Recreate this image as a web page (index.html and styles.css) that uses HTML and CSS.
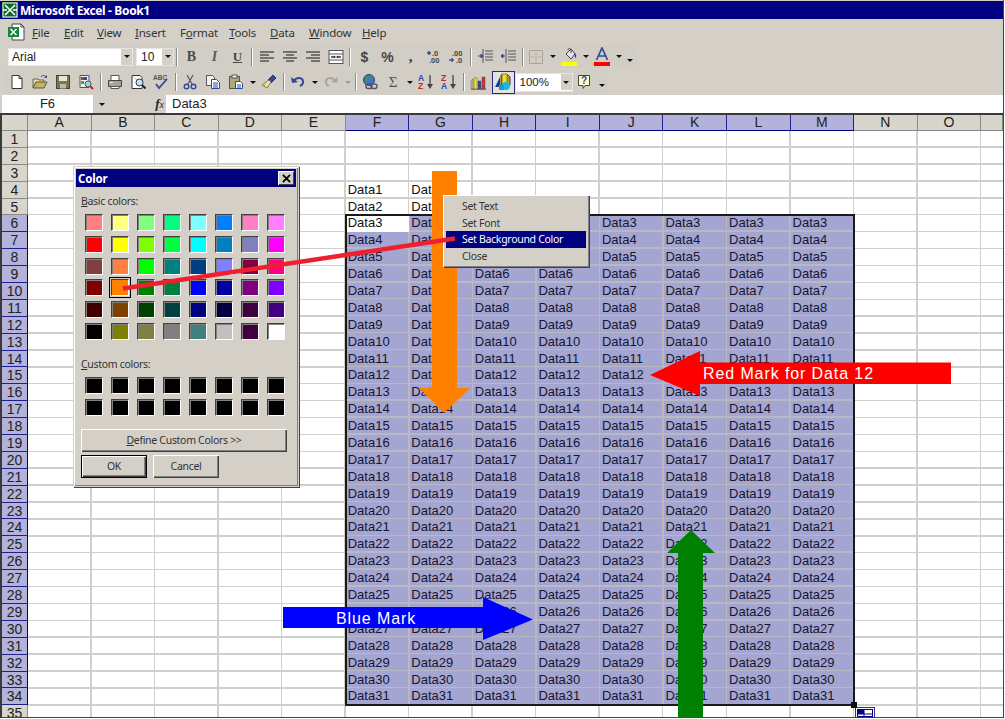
FILE: index.html
```html
<!DOCTYPE html>
<html lang="en">
<head>
<meta charset="utf-8">
<title>Microsoft Excel - Book1</title>
<link rel="stylesheet" href="styles.css">
</head>
<body>
<div class="window">
  <header class="titlebar">
    <svg class="appicon" viewBox="0 0 16 16"><rect width="16" height="16" fill="#0b6b2a"/><rect x="1" y="1" width="14" height="14" fill="none" stroke="#fff"/><path d="M3 3l10 10M13 3L3 13M1 8h4M11 8h4" stroke="#fff" stroke-width="1.6"/></svg>
    <span>Microsoft Excel - Book1</span>
  </header>
  <nav class="menubar">
    <svg class="docicon" viewBox="0 0 18 18"><path d="M5 1h9l3 3v13H5z" fill="#fff" stroke="#444"/><path d="M14 1v3h3" fill="none" stroke="#444"/><rect x="1" y="4" width="11" height="10" fill="#128a3c"/><path d="M3.500 6l6 6M9.500 6l-6 6" stroke="#fff" stroke-width="1.500"/></svg>
    <span class="m1"><u>F</u>ile</span><span class="m2"><u>E</u>dit</span><span class="m3"><u>V</u>iew</span><span class="m4"><u>I</u>nsert</span><span class="m5">F<u>o</u>rmat</span><span class="m6"><u>T</u>ools</span><span class="m7"><u>D</u>ata</span><span class="m8"><u>W</u>indow</span><span class="m9"><u>H</u>elp</span>
  </nav>
  <div class="toolbar tb-format">
    <div class="combo font-combo"><span>Arial</span><i class="combo-btn"><b class="dd"></b></i></div>
    <div class="combo size-combo"><span>10</span><i class="combo-btn"><b class="dd"></b></i></div>
    <i class="sep"></i>
    <span class="btn t-b">B</span><span class="btn t-i">I</span><span class="btn t-u">U</span>
    <i class="sep"></i>
    <span class="btn"><svg class="ic" viewBox="0 0 16 16"><path d="M1 3h14M1 6h9M1 9h14M1 12h9" stroke="#555" fill="none" stroke-width="1.300"/></svg></span>
    <span class="btn"><svg class="ic" viewBox="0 0 16 16"><path d="M1 3h14M4 6h8M1 9h14M4 12h8" stroke="#555" fill="none" stroke-width="1.300"/></svg></span>
    <span class="btn"><svg class="ic" viewBox="0 0 16 16"><path d="M1 3h14M6 6h9M1 9h14M6 12h9" stroke="#555" fill="none" stroke-width="1.300"/></svg></span>
    <span class="btn"><svg class="ic" viewBox="0 0 16 16"><rect x="1" y="1.500" width="14" height="13" fill="#fff" stroke="#555"/><path d="M1 5h14M1 11h14" stroke="#555"/><path d="M3 8h3M10 8h3" stroke="#234" stroke-width="1.500"/><path d="M6 6.500L8 8 6 9.500zM10 6.500L8 8l2 1.500z" fill="#234"/></svg></span>
    <i class="sep"></i>
    <span class="btn t-sym">$</span><span class="btn t-pct">%</span><span class="btn t-comma">,</span>
    <span class="btn"><svg class="ic" viewBox="0 0 16 16"><text x="6" y="7" class="mini">.0</text><text x="3" y="14" class="mini">.00</text><path d="M1 4h4M3 2v4" stroke="#33489a" stroke-width="1.300"/></svg></span>
    <span class="btn"><svg class="ic" viewBox="0 0 16 16"><text x="3" y="7" class="mini">.00</text><text x="7" y="14" class="mini">.0</text><path d="M0 11h5" stroke="#33489a" stroke-width="1.300"/><path d="M3 9v4" stroke="#33489a" stroke-width="1.300"/></svg></span>
    <i class="sep"></i>
    <span class="btn"><svg class="ic" viewBox="0 0 16 16"><path d="M7 2h8M7 5h8M7 8h8M7 11h8M5 14v-14" stroke="#555" fill="none"/><path d="M0 7h3M3 5l2 2-2 2z" stroke="#33489a" fill="#33489a"/></svg></span>
    <span class="btn"><svg class="ic" viewBox="0 0 16 16"><path d="M7 2h8M7 5h8M7 8h8M7 11h8M5 14v-14" stroke="#555" fill="none"/><path d="M1 7h3M2 5L0 7l2 2z" stroke="#33489a" fill="#33489a"/></svg></span>
    <i class="sep sep-n"></i>
    <span class="btn"><svg class="ic" viewBox="0 0 16 16"><rect x="1.500" y="1.500" width="13" height="13" fill="none" stroke="#aaa69e"/><path d="M8 2v12M2 8h12" stroke="#b8b4ac"/></svg></span><span class="ddw"><b class="dd"></b></span>
    <span class="btn"><svg class="ic tall" viewBox="0 0 16 20"><path d="M5 7l5-5 4 5-4 5z" fill="#e8e4dc" stroke="#445"/><path d="M14 6c2 2 1 4 1 5-1 0-2-2-1-5z" fill="#33489a"/><path d="M7 3c0-2 3-2 3 0v3" fill="none" stroke="#445"/><rect y="15" width="16" height="4" fill="#ff0"/></svg></span><span class="ddw"><b class="dd"></b></span>
    <span class="btn"><svg class="ic tall" viewBox="0 0 16 20"><path d="M2.500 13L8 1l5.500 12M5 9h6" fill="none" stroke="#33489a" stroke-width="1.700"/><rect y="15" width="16" height="4" fill="#f00"/></svg></span><span class="ddw"><b class="dd"></b></span>
    <span class="chev"><b class="dd"></b></span>
  </div>
  <div class="toolbar tb-std">
    <span class="btn"><svg class="ic" viewBox="0 0 16 16"><path d="M3 1.500h7l3 3v10H3z" fill="#fff" stroke="#333"/><path d="M10 1.500v3h3" fill="none" stroke="#333"/></svg></span>
    <span class="btn"><svg class="ic" viewBox="0 0 16 16"><path d="M1 14V5h5l1 1h5v2" fill="#e8d890" stroke="#666"/><path d="M1 14l3-6h11l-3 6z" fill="#c4b458" stroke="#555"/><path d="M9 3c1-2 4-2 5 0" fill="none" stroke="#33489a"/><path d="M15 1v3h-3z" fill="#33489a"/></svg></span>
    <span class="btn"><svg class="ic" viewBox="0 0 16 16"><rect x="1.500" y="1.500" width="13" height="13" fill="#7c7640" stroke="#444"/><rect x="4" y="2" width="8" height="5" fill="#e8e6da"/><rect x="5" y="10" width="6" height="4.500" fill="#b8b8b8"/></svg></span>
    <span class="btn"><svg class="ic" viewBox="0 0 16 16"><path d="M2 1.500h9v12H2z" fill="#f4f2ee" stroke="#555"/><rect x="3" y="3" width="3" height="3" fill="#c33"/><rect x="6" y="3" width="3" height="3" fill="#33489a"/><rect x="3" y="7" width="3" height="3" fill="#3a3"/><circle cx="10" cy="10" r="3" fill="#8fd6e8" stroke="#555"/><path d="M12 12l3 3" stroke="#c22" stroke-width="2"/></svg></span>
    <i class="sep"></i>
    <span class="btn"><svg class="ic" viewBox="0 0 16 16"><path d="M4 6V1.500h8V6" fill="#fff" stroke="#555"/><path d="M1.500 6.500h13v6h-13z" fill="#a8a49c" stroke="#444"/><path d="M4 12.500h8v2H4z" fill="#fff" stroke="#555"/><path d="M3 8.500h3" stroke="#eee"/></svg></span>
    <span class="btn"><svg class="ic" viewBox="0 0 16 16"><path d="M2 1.500h8l2 2v5M12 13v1.500H2v-13" fill="#fff" stroke="#333"/><circle cx="9.500" cy="8.500" r="3.500" fill="#bfe4ee" stroke="#334"/><path d="M12 11l3.500 3.500" stroke="#223" stroke-width="2"/></svg></span>
    <span class="btn"><svg class="ic" viewBox="0 0 16 16"><text x="0" y="6" class="abc">ABC</text><path d="M3 10l3 4 8-9" fill="none" stroke="#33489a" stroke-width="1.800"/></svg></span>
    <i class="sep"></i>
    <span class="btn"><svg class="ic" viewBox="0 0 16 16"><path d="M5 1l5 9M11 1L6 10" stroke="#556" stroke-width="1.200"/><circle cx="4.500" cy="12.500" r="2.300" fill="none" stroke="#33489a" stroke-width="1.400"/><circle cx="11.500" cy="12.500" r="2.300" fill="none" stroke="#33489a" stroke-width="1.400"/></svg></span>
    <span class="btn"><svg class="ic" viewBox="0 0 16 16"><path d="M1.500 1.500h6l2 2v8h-8z" fill="#f4f2ee" stroke="#556"/><path d="M6.500 5.500h5l3 3v6h-8z" fill="#fff" stroke="#33489a"/><path d="M8 9h5M8 11h5M8 13h5" stroke="#33489a"/></svg></span>
    <span class="btn"><svg class="ic" viewBox="0 0 16 16"><rect x="1.500" y="2.500" width="10" height="12" fill="#b0a878" stroke="#555"/><rect x="4" y="1" width="5" height="3" fill="#eee" stroke="#555"/><path d="M7.500 7.500h5l2 2v5h-7z" fill="#fff" stroke="#33489a"/><path d="M9 11h4M9 13h4" stroke="#33489a"/></svg></span><span class="ddw"><b class="dd"></b></span>
    <span class="btn"><svg class="ic" viewBox="0 0 16 16"><path d="M7 6l5-5 3 3-5 5z" fill="#33489a" stroke="#334"/><path d="M8 6l2 2-4 6-5-3z" fill="#f0e68c" stroke="#777"/><path d="M3 12l2-2" stroke="#b8a840"/></svg></span>
    <i class="sep"></i>
    <span class="btn"><svg class="ic" viewBox="0 0 16 16"><path d="M4 7c2-4 8-4 9 0 .5 2-1 4-3 5" fill="none" stroke="#33489a" stroke-width="2"/><path d="M1 3l1 6 6-1z" fill="#33489a"/></svg></span><span class="ddw"><b class="dd"></b></span>
    <span class="btn"><svg class="ic" viewBox="0 0 16 16"><path d="M12 7c-2-4-8-4-9 0-.5 2 1 4 3 5" fill="none" stroke="#aaa69e" stroke-width="2"/><path d="M15 3l-1 6-6-1z" fill="#aaa69e"/></svg></span><span class="ddw"><b class="dd dd-off"></b></span>
    <i class="sep"></i>
    <span class="btn"><svg class="ic" viewBox="0 0 16 16"><circle cx="7" cy="6" r="5.500" fill="#3b78c8" stroke="#345"/><path d="M3 3c2 0 3 1 3 3s-2 1-3 0zM7 1c2 1 4 2 3 4-1 1-2 0-3-1z" fill="#3a9a4a"/><rect x="4" y="10" width="6" height="4.500" rx="2" fill="none" stroke="#556" stroke-width="1.400"/><rect x="9" y="10" width="6" height="4.500" rx="2" fill="none" stroke="#556" stroke-width="1.400"/></svg></span>
    <span class="btn t-sigma">Σ</span><span class="ddw"><b class="dd"></b></span>
    <span class="btn"><svg class="ic" viewBox="0 0 16 16"><text x="0" y="7" class="sa">A</text><text x="0" y="15" class="sz">Z</text><path d="M12 1v12" stroke="#444" stroke-width="1.300"/><path d="M9 10h6l-3 5z" fill="#444"/></svg></span>
    <span class="btn"><svg class="ic" viewBox="0 0 16 16"><text x="0" y="7" class="sz">Z</text><text x="0" y="15" class="sa">A</text><path d="M12 1v12" stroke="#444" stroke-width="1.300"/><path d="M9 10h6l-3 5z" fill="#444"/></svg></span>
    <i class="sep"></i>
    <span class="btn"><svg class="ic" viewBox="0 0 16 16"><path d="M1 15h15" stroke="#333"/><path d="M1 7l2-2v10H1z" fill="#c8c4a0" stroke="#555" stroke-width=".5"/><rect x="4" y="4" width="3" height="11" fill="#f4e040" stroke="#555" stroke-width=".5"/><rect x="8" y="7" width="3" height="8" fill="#33489a" stroke="#555" stroke-width=".5"/><rect x="12" y="3" width="3" height="12" fill="#c33" stroke="#555" stroke-width=".5"/></svg></span>
    <span class="btn btn-on"><svg class="ic ic-l" viewBox="0 0 18 18"><path d="M7 2h7l2 2v8H7z" fill="#b8a020" stroke="#443"/><rect x="8" y="1" width="5" height="10" fill="#f0e020" stroke="#443" stroke-width=".6"/><path d="M1 14L6 4v10z" fill="#1c3c9c"/><circle cx="12" cy="13" r="4" fill="#18b8e8"/><rect x="5" y="12" width="5" height="5" fill="#18a0d0"/></svg></span>
    <div class="combo zoom-combo"><span>100%</span><i class="combo-btn"><b class="dd"></b></i></div>
    <span class="btn"><svg class="ic" viewBox="0 0 16 16"><path d="M2.500 1.500h11v10H9l-2 3v-3H2.500z" fill="#ffffc8" stroke="#444"/><text x="5" y="10" class="q">?</text></svg></span>
    <span class="chev"><b class="dd"></b></span>
  </div>
  <div class="formula">
    <div class="namebox">F6</div>
    <span class="name-dd"><b class="dd"></b></span>
    <span class="fx"><em>f</em><small>x</small></span>
    <div class="fx-input">Data3</div>
  </div>
  <div class="sheet">
    <div class="colhdr">
      <i class="corner"></i>
      <span>A</span><span>B</span><span>C</span><span>D</span><span>E</span><span class="sel">F</span><span class="sel">G</span><span class="sel">H</span><span class="sel">I</span><span class="sel">J</span><span class="sel">K</span><span class="sel">L</span><span class="sel">M</span><span>N</span><span>O</span><span></span>
    </div>
    <div class="sheet-main">
      <div class="rowhdr">
        <span>1</span><span>2</span><span>3</span><span>4</span><span>5</span><span class="sel">6</span><span class="sel">7</span><span class="sel">8</span><span class="sel">9</span><span class="sel">10</span><span class="sel">11</span><span class="sel">12</span><span class="sel">13</span><span class="sel">14</span><span class="sel">15</span><span class="sel">16</span><span class="sel">17</span><span class="sel">18</span><span class="sel">19</span><span class="sel">20</span><span class="sel">21</span><span class="sel">22</span><span class="sel">23</span><span class="sel">24</span><span class="sel">25</span><span class="sel">26</span><span class="sel">27</span><span class="sel">28</span><span class="sel">29</span><span class="sel">30</span><span class="sel">31</span><span class="sel">32</span><span class="sel">33</span><span class="sel">34</span><span>35</span>
      </div>
      <div class="cells">
        <div class="head-data">
          <span>Data1</span><span>Data1</span><span>Data2</span><span>Data2</span>
        </div>
        <div class="block">
          <span class="active">Data3</span><span>Data3</span><span>Data3</span><span>Data3</span><span>Data3</span><span>Data3</span><span>Data3</span><span>Data3</span>
          <span>Data4</span><span>Data4</span><span>Data4</span><span>Data4</span><span>Data4</span><span>Data4</span><span>Data4</span><span>Data4</span>
          <span>Data5</span><span>Data5</span><span>Data5</span><span>Data5</span><span>Data5</span><span>Data5</span><span>Data5</span><span>Data5</span>
          <span>Data6</span><span>Data6</span><span>Data6</span><span>Data6</span><span>Data6</span><span>Data6</span><span>Data6</span><span>Data6</span>
          <span>Data7</span><span>Data7</span><span>Data7</span><span>Data7</span><span>Data7</span><span>Data7</span><span>Data7</span><span>Data7</span>
          <span>Data8</span><span>Data8</span><span>Data8</span><span>Data8</span><span>Data8</span><span>Data8</span><span>Data8</span><span>Data8</span>
          <span>Data9</span><span>Data9</span><span>Data9</span><span>Data9</span><span>Data9</span><span>Data9</span><span>Data9</span><span>Data9</span>
          <span>Data10</span><span>Data10</span><span>Data10</span><span>Data10</span><span>Data10</span><span>Data10</span><span>Data10</span><span>Data10</span>
          <span>Data11</span><span>Data11</span><span>Data11</span><span>Data11</span><span>Data11</span><span>Data11</span><span>Data11</span><span>Data11</span>
          <span>Data12</span><span>Data12</span><span>Data12</span><span>Data12</span><span>Data12</span><span>Data12</span><span>Data12</span><span>Data12</span>
          <span>Data13</span><span>Data13</span><span>Data13</span><span>Data13</span><span>Data13</span><span>Data13</span><span>Data13</span><span>Data13</span>
          <span>Data14</span><span>Data14</span><span>Data14</span><span>Data14</span><span>Data14</span><span>Data14</span><span>Data14</span><span>Data14</span>
          <span>Data15</span><span>Data15</span><span>Data15</span><span>Data15</span><span>Data15</span><span>Data15</span><span>Data15</span><span>Data15</span>
          <span>Data16</span><span>Data16</span><span>Data16</span><span>Data16</span><span>Data16</span><span>Data16</span><span>Data16</span><span>Data16</span>
          <span>Data17</span><span>Data17</span><span>Data17</span><span>Data17</span><span>Data17</span><span>Data17</span><span>Data17</span><span>Data17</span>
          <span>Data18</span><span>Data18</span><span>Data18</span><span>Data18</span><span>Data18</span><span>Data18</span><span>Data18</span><span>Data18</span>
          <span>Data19</span><span>Data19</span><span>Data19</span><span>Data19</span><span>Data19</span><span>Data19</span><span>Data19</span><span>Data19</span>
          <span>Data20</span><span>Data20</span><span>Data20</span><span>Data20</span><span>Data20</span><span>Data20</span><span>Data20</span><span>Data20</span>
          <span>Data21</span><span>Data21</span><span>Data21</span><span>Data21</span><span>Data21</span><span>Data21</span><span>Data21</span><span>Data21</span>
          <span>Data22</span><span>Data22</span><span>Data22</span><span>Data22</span><span>Data22</span><span>Data22</span><span>Data22</span><span>Data22</span>
          <span>Data23</span><span>Data23</span><span>Data23</span><span>Data23</span><span>Data23</span><span>Data23</span><span>Data23</span><span>Data23</span>
          <span>Data24</span><span>Data24</span><span>Data24</span><span>Data24</span><span>Data24</span><span>Data24</span><span>Data24</span><span>Data24</span>
          <span>Data25</span><span>Data25</span><span>Data25</span><span>Data25</span><span>Data25</span><span>Data25</span><span>Data25</span><span>Data25</span>
          <span>Data26</span><span>Data26</span><span>Data26</span><span>Data26</span><span>Data26</span><span>Data26</span><span>Data26</span><span>Data26</span>
          <span>Data27</span><span>Data27</span><span>Data27</span><span>Data27</span><span>Data27</span><span>Data27</span><span>Data27</span><span>Data27</span>
          <span>Data28</span><span>Data28</span><span>Data28</span><span>Data28</span><span>Data28</span><span>Data28</span><span>Data28</span><span>Data28</span>
          <span>Data29</span><span>Data29</span><span>Data29</span><span>Data29</span><span>Data29</span><span>Data29</span><span>Data29</span><span>Data29</span>
          <span>Data30</span><span>Data30</span><span>Data30</span><span>Data30</span><span>Data30</span><span>Data30</span><span>Data30</span><span>Data30</span>
          <span>Data31</span><span>Data31</span><span>Data31</span><span>Data31</span><span>Data31</span><span>Data31</span><span>Data31</span><span>Data31</span>
        </div>
      </div>
    </div>
  </div>
</div>

<div class="autofill"><svg viewBox="0 0 16 8"><rect x="0.500" y="0.500" width="15" height="7" fill="#fff" stroke="#000080"/><rect x="1" y="1" width="6" height="4" fill="#000080"/><path d="M7 1v7M1 5h14" stroke="#000080"/></svg></div>
<i class="handle"></i>

<svg class="marks" viewBox="0 0 1005 719">
  <path class="m-orange" d="M432 171h25v217h13l-26 25-25-25h13z"/>
  <path class="m-red" d="M951 362.500V384H700v12l-50-21 50-24v11.500z"/>
  <path class="m-blue" d="M283 607h200v-10l50 22.500-50 20.500v-12H283z"/>
  <path class="m-green" d="M678 718V553h-11l24-23 24 23h-12v165z"/>
  <text x="703" y="379" class="mark-text">Red Mark for Data 12</text>
  <text x="336" y="624" class="mark-text">Blue Mark</text>
</svg>

<section class="dialog">
  <div class="dlg-title"><span>Color</span><i class="dlg-close"><svg viewBox="0 0 10 10"><path d="M1 1l8 8M9 1l-8 8" stroke="#000" stroke-width="2"/></svg></i></div>
  <label class="dlg-label"><u>B</u>asic colors:</label>
  <div class="swatches">
    <i class="c-ff8080"></i><i class="c-ffff80"></i><i class="c-80ff80"></i><i class="c-00ff80"></i><i class="c-80ffff"></i><i class="c-0080ff"></i><i class="c-ff80c0"></i><i class="c-ff80ff"></i>
    <i class="c-ff0000"></i><i class="c-ffff00"></i><i class="c-80ff00"></i><i class="c-00ff40"></i><i class="c-00ffff"></i><i class="c-0080c0"></i><i class="c-8080c0"></i><i class="c-ff00ff"></i>
    <i class="c-804040"></i><i class="c-ff8040"></i><i class="c-00ff00"></i><i class="c-008080"></i><i class="c-004080"></i><i class="c-8080ff"></i><i class="c-800040"></i><i class="c-ff0080"></i>
    <i class="c-800000"></i><i class="c-ff8000 picked"></i><i class="c-008000"></i><i class="c-008040"></i><i class="c-0000ff"></i><i class="c-0000a0"></i><i class="c-800080"></i><i class="c-8000ff"></i>
    <i class="c-400000"></i><i class="c-804000"></i><i class="c-004000"></i><i class="c-004040"></i><i class="c-000080"></i><i class="c-000040"></i><i class="c-400040"></i><i class="c-400080"></i>
    <i class="c-000000"></i><i class="c-808000"></i><i class="c-808040"></i><i class="c-808080"></i><i class="c-408080"></i><i class="c-c0c0c0"></i><i class="c-400040"></i><i class="c-ffffff"></i>
  </div>
  <label class="dlg-label custom-label"><u>C</u>ustom colors:</label>
  <div class="swatches">
    <i class="c-000000"></i><i class="c-000000"></i><i class="c-000000"></i><i class="c-000000"></i><i class="c-000000"></i><i class="c-000000"></i><i class="c-000000"></i><i class="c-000000"></i>
    <i class="c-000000"></i><i class="c-000000"></i><i class="c-000000"></i><i class="c-000000"></i><i class="c-000000"></i><i class="c-000000"></i><i class="c-000000"></i><i class="c-000000"></i>
  </div>
  <button class="dlg-btn define"><u>D</u>efine Custom Colors &gt;&gt;</button>
  <div class="dlg-actions">
    <button class="dlg-btn ok">OK</button>
    <button class="dlg-btn">Cancel</button>
  </div>
</section>

<ul class="ctx">
  <li>Set Text</li>
  <li>Set Font</li>
  <li class="hot">Set Background Color</li>
  <li>Close</li>
</ul>

<svg class="marks" viewBox="0 0 1005 719">
  <path class="m-line" d="M123 288.500L455 238.500"/>
</svg>
```

FILE: styles.css
```css
* { box-sizing: border-box; }
html, body { margin: 0; padding: 0; }
body {
  position: relative;
  width: 1005px;
  height: 719px;
  overflow: hidden;
  background: #fff;
  font-family: "Noto Sans", "Liberation Sans", sans-serif;
  font-size: 11px;
  color: #222;
}
.window {
  width: 1004px;
  height: 718px;
  padding-top: 1px;
  background: #d4d0c8;
  border-right: 1px solid #444;
  border-bottom: 1px solid #444;
  overflow: hidden;
}
.titlebar {
  height: 18px;
  background: #000080;
  color: #fff;
  font-weight: 700;
  font-size: 12px;
  letter-spacing: -.35px;
  display: flex;
  align-items: center;
  gap: 2px;
  padding-left: 2px;
}
.appicon { width: 16px; height: 16px; }
.menubar {
  height: 26px;
  display: flex;
  align-items: center;
  font-size: 11.5px;
  letter-spacing: -.2px;
  color: #333;
  position: relative;
  padding-left: 7px;
}
.docicon { width: 18px; height: 18px; margin-right: 7px; }
.menubar span { display: block; }
.m1 { width: 32px; }
.m2 { width: 33px; }
.m3 { width: 38px; }
.m4 { width: 45px; }
.m5 { width: 49px; }
.m6 { width: 41px; }
.m7 { width: 39px; }
.m8 { width: 53px; }
.toolbar {
  display: flex;
  align-items: center;
  background: #d2cec6;
}
.tb-format { width: 630px; height: 23px; margin: 0 0 2px 7px; padding-left: 1px; }
.tb-std { width: 605px; height: 24px; margin: 0 0 1px 3px; padding-left: 2.500px; }
.btn {
  flex: none;
  width: 23px;
  height: 22px;
  display: flex;
  align-items: center;
  justify-content: center;
  color: #555;
}
.btn-on {
  width: 23px;
  height: 23px;
  margin-left: 2px;
  background: #e4e2de;
  border: 1px solid #2a2a86;
}
.ic { width: 16px; height: 16px; }
.ic.tall { width: 16px; height: 20px; }
.ic-l { width: 18px; height: 18px; }
.sep {
  flex: none;
  width: 6px;
  height: 18px;
  margin: 0;
  background: linear-gradient(to right, transparent 2px, #8c8a84 2px, #8c8a84 3px, #fff 3px, #fff 4px, transparent 4px);
}
.sep-n { width: 4.500px; }
.ddw, .chev {
  flex: none;
  width: 10px;
  height: 22px;
  display: flex;
  align-items: center;
  justify-content: center;
}
.chev { padding-top: 7px; margin-left: 1px; }
.dd {
  display: block;
  width: 0;
  height: 0;
  border: 3px solid transparent;
  border-top: 3px solid #111;
  border-bottom: 0;
}
.dd-off { border-top-color: #999; }
.combo {
  flex: none;
  height: 18px;
  background: #fff;
  display: flex;
  align-items: center;
  justify-content: space-between;
  font-family: "Liberation Sans", sans-serif;
  font-size: 12px;
  color: #222;
  padding-left: 3px;
  border: 1px solid #e8e6e2;
}
.combo span { display: block; }
.combo-btn {
  display: flex;
  width: 11px;
  height: 16px;
  background: #d4d0c8;
  align-items: center;
  justify-content: center;
}
.font-combo { width: 125px; margin-right: 3px; }
.size-combo { width: 38px; padding-left: 4px; }
.zoom-combo { width: 58px; height: 19px; margin-left: 0; padding-left: 4px; font-size: 11.500px; }
.t-b { font: 700 14px "Liberation Serif", serif; color: #4a4a4a; }
.t-i { font: italic 700 14px "Liberation Serif", serif; color: #5a5a5a; }
.t-u { font: 700 13px "Liberation Serif", serif; color: #4a4a4a; text-decoration: underline; }
.t-sym { font: 700 14px "Liberation Sans", sans-serif; color: #444; }
.t-pct { font: 700 14px "Liberation Sans", sans-serif; color: #444; }
.t-comma { font: 700 15px "Liberation Serif", serif; color: #333; }
.t-sigma { font: 15px "Liberation Serif", serif; color: #555; }
.mini { font: 700 7.500px "Liberation Sans", sans-serif; fill: #444; }
.abc { font: 700 6.500px "Liberation Sans", sans-serif; fill: #555; }
.sa { font: 700 8.500px "Liberation Sans", sans-serif; fill: #3348a0; }
.sz { font: 700 8.500px "Liberation Sans", sans-serif; fill: #c02828; }
.q { font: 700 10px "Liberation Sans", sans-serif; fill: #33489a; }
.formula {
  height: 18px;
  margin-top: 0;
  display: flex;
  align-items: center;
  font-family: "Liberation Sans", sans-serif;
  font-size: 13px;
  color: #222;
}
.namebox {
  width: 91px;
  height: 18px;
  margin-left: 2px;
  background: #fff;
  text-align: center;
  line-height: 18px;
}
.name-dd { width: 18px; display: flex; justify-content: center; }
.fx { width: 55px; text-align: right; font: italic 13px "Liberation Serif", serif; padding-right: 2px; color: #222; }
.fx em { font-style: italic; font-weight: 700; }
.fx small { font-size: 10px; }
.fx-input { flex: 1; height: 18px; background: #fff; line-height: 17px; padding-left: 6px; }
.sheet {
  height: 604px;
  border-top: 2px solid #3a3a3a;
  border-left: 2px solid #3a3a3a;
  background: #fff;
  font-family: "Liberation Sans", sans-serif;
  font-size: 13px;
  overflow: hidden;
}
.colhdr {
  height: 16px;
  display: grid;
  grid-template-columns: 26px repeat(15, 63.550px) 1fr;
  background: #d8d5cd;
  border-bottom: 1px solid #888;
}
.colhdr .corner { border-right: 1px solid #888; }
.colhdr span {
  display: block;
  text-align: center;
  line-height: 15px;
  font-size: 14px;
  color: #222;
  border-right: 1px solid #8c8a86;
}
.colhdr .sel { background: #b2b2da; border-right: 1px solid #1f1f8f; border-bottom: 1px solid #000080; height: 16px; }
.sheet-main { display: flex; }
.rowhdr {
  flex: none;
  width: 26px;
  display: grid;
  grid-template-rows: repeat(35, 16.900px);
  background: #d8d5cd;
}
.rowhdr span {
  display: block;
  text-align: center;
  line-height: 16px;
  font-size: 14px;
  color: #222;
  border-right: 1px solid #8c8a86;
  border-bottom: 1px solid #8c8a86;
}
.rowhdr .sel { background: #b2b2da; border-right: 1px solid #000080; border-bottom: 1px solid #1f1f8f; }
.cells {
  flex: 1;
  display: grid;
  grid-template-columns: repeat(15, 63.550px);
  grid-template-rows: repeat(35, 16.900px);
  background-image:
    repeating-linear-gradient(to right, transparent 0, transparent 62.050px, #cfcfcf 62.050px, #cfcfcf 63.550px),
    repeating-linear-gradient(to bottom, transparent 0, transparent 15.400px, #cfcfcf 15.400px, #cfcfcf 16.900px);
  color: #111;
}
.head-data {
  grid-column: 6 / 8;
  grid-row: 4 / 6;
  display: grid;
  grid-template-columns: repeat(2, 63.550px);
  grid-template-rows: repeat(2, 16.900px);
}
.head-data span, .block span { display: block; padding-left: 2px; line-height: 16.900px; white-space: nowrap; }
.block {
  grid-column: 6 / 14;
  grid-row: 6 / 35;
  display: grid;
  grid-template-columns: repeat(8, 63.550px);
  grid-template-rows: repeat(29, 16.900px);
  background-color: #a5a5d1;
  background-image:
    repeating-linear-gradient(to right, transparent 0, transparent 62.050px, #b9b9c4 62.050px, #b9b9c4 63.550px),
    repeating-linear-gradient(to bottom, transparent 0, transparent 15.400px, #b9b9c4 15.400px, #b9b9c4 16.900px);
  color: #161630;
  outline: 2px solid #1a1a1a;
  outline-offset: -1px;
}
.block .active { background: #fff; color: #111; }
.autofill { position: absolute; left: 855px; top: 707px; width: 20px; height: 11px; border: 1px solid #2a2ab0; background: #fff; padding: 1px; }
.autofill svg { display: block; width: 16px; height: 8px; }
.handle { position: absolute; left: 851px; top: 702px; width: 6px; height: 6px; background: #111; }
.marks { position: absolute; left: 0; top: 0; width: 1005px; height: 719px; pointer-events: none; }
.m-orange { fill: #ff8000; }
.m-red { fill: #ff0000; }
.m-blue { fill: #0000ff; }
.m-green { fill: #008000; }
.m-line { stroke: #ee2030; stroke-width: 4.500; fill: none; }
.mark-text { font: 16px "Liberation Sans", sans-serif; letter-spacing: .9px; fill: #fff; }
.dialog {
  position: absolute;
  left: 73px;
  top: 166px;
  width: 226px;
  height: 321px;
  background: #d4d0c8;
  border: 1px solid #d4d0c8;
  box-shadow: inset 1px 1px 0 #fff, 1px 1px 0 #404040, inset -1px -1px 0 #808080;
  padding: 2px;
  color: #333;
  font-size: 10.500px;
  letter-spacing: -.3px;
}
.dlg-title {
  height: 18px;
  background: #000080;
  color: #fff;
  font-weight: 700;
  font-size: 11.500px;
  letter-spacing: -.2px;
  display: flex;
  align-items: center;
  justify-content: space-between;
  padding: 0 2px;
}
.dlg-close {
  display: flex;
  width: 16px;
  height: 14px;
  align-items: center;
  justify-content: center;
  background: #d4d0c8;
  box-shadow: inset 1px 1px 0 #fff, inset -1px -1px 0 #404040;
}
.dlg-close svg { width: 9px; height: 9px; }
.dlg-label { display: block; margin: 7px 0 0 5px; height: 15px; line-height: 15px; }
.custom-label { margin-top: 17px; }
.swatches {
  display: grid;
  grid-template-columns: repeat(8, 18px);
  column-gap: 8px;
  row-gap: 4.800px;
  margin: 5px 0 0 9px;
}
.swatches i {
  display: block;
  height: 17px;
  border: 1px solid;
  border-color: #404040 #fff #fff #404040;
  box-shadow: inset 1px 1px 0 #808080;
}
.swatches .picked { outline: 1px solid #000; outline-offset: 1px; box-shadow: none; }
.dlg-btn {
  display: block;
  height: 23px;
  padding: 0;
  margin: 0;
  font: inherit;
  letter-spacing: inherit;
  color: #333;
  background: #d4d0c8;
  border: 0;
  box-shadow: inset 1px 1px 0 #fff, inset -1px -1px 0 #404040, inset -2px -2px 0 #808080;
}
.define { width: 206px; margin: 13px 0 0 5px; }
.dlg-actions { display: flex; gap: 6px; margin: 3px 0 0 5px; }
.dlg-actions .dlg-btn { width: 66px; }
.dlg-actions .ok { border: 1px solid #000; width: 66px; }
.ctx {
  position: absolute;
  left: 443px;
  top: 195px;
  width: 146px;
  height: 72px;
  margin: 0;
  padding: 3px;
  list-style: none;
  background: #d4d0c8;
  box-shadow: inset 1px 1px 0 #fff, 1px 1px 0 #404040, inset -1px -1px 0 #808080;
  border: 0;
  color: #333;
  font-size: 10.500px;
  letter-spacing: -.3px;
}
.ctx li { height: 16.700px; line-height: 16px; padding-left: 16px; white-space: nowrap; }
.ctx .hot { background: #000080; color: #fff; }
.c-ff8080{background:#ff8080}.c-ffff80{background:#ffff80}.c-80ff80{background:#80ff80}.c-00ff80{background:#00ff80}.c-80ffff{background:#80ffff}.c-0080ff{background:#0080ff}.c-ff80c0{background:#ff80c0}.c-ff80ff{background:#ff80ff}
.c-ff0000{background:#ff0000}.c-ffff00{background:#ffff00}.c-80ff00{background:#80ff00}.c-00ff40{background:#00ff40}.c-00ffff{background:#00ffff}.c-0080c0{background:#0080c0}.c-8080c0{background:#8080c0}.c-ff00ff{background:#ff00ff}
.c-804040{background:#804040}.c-ff8040{background:#ff8040}.c-00ff00{background:#00ff00}.c-008080{background:#008080}.c-004080{background:#004080}.c-8080ff{background:#8080ff}.c-800040{background:#800040}.c-ff0080{background:#ff0080}
.c-800000{background:#800000}.c-ff8000{background:#ff8000}.c-008000{background:#008000}.c-008040{background:#008040}.c-0000ff{background:#0000ff}.c-0000a0{background:#0000a0}.c-800080{background:#800080}.c-8000ff{background:#8000ff}
.c-400000{background:#400000}.c-804000{background:#804000}.c-004000{background:#004000}.c-004040{background:#004040}.c-000080{background:#000080}.c-000040{background:#000040}.c-400040{background:#400040}.c-400080{background:#400080}
.c-000000{background:#000000}.c-808000{background:#808000}.c-808040{background:#808040}.c-808080{background:#808080}.c-408080{background:#408080}.c-c0c0c0{background:#c0c0c0}.c-ffffff{background:#ffffff}
```
